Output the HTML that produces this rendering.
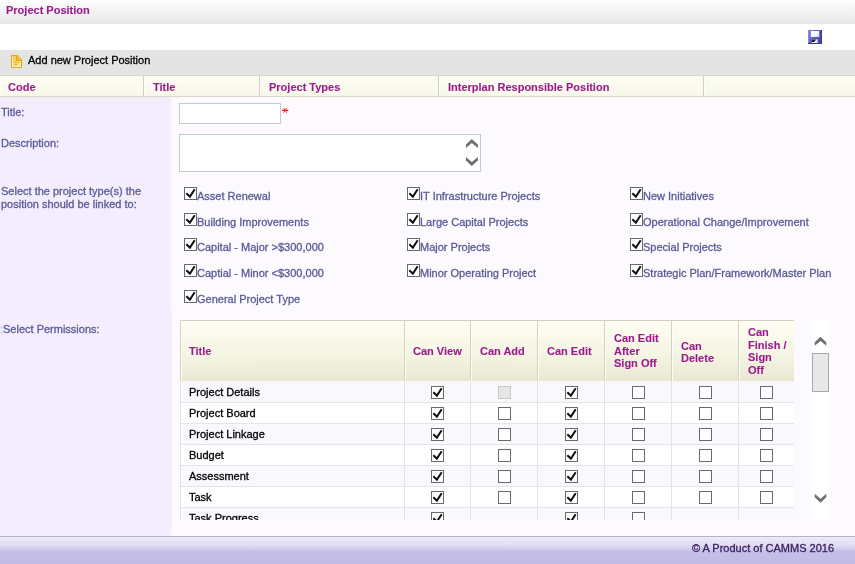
<!DOCTYPE html>
<html><head><meta charset="utf-8">
<style>
*{box-sizing:border-box;margin:0;padding:0}
html,body{width:855px;height:564px;overflow:hidden;background:#fcfaff;font-family:"Liberation Sans",sans-serif;font-size:11px;color:#000}
.abs{position:absolute}
#hdr{left:0;top:0;width:855px;height:24px;background:linear-gradient(#fdfdfd,#f2f2f2 50%,#e6e6e6)}
#hdr span{position:absolute;left:6px;top:4px;font-weight:bold;color:#9a1c8c;white-space:nowrap}
#white{left:0;top:24px;width:855px;height:26px;background:#fff}
#bar{left:0;top:50px;width:855px;height:25px;background:#e4e4e4}
#bar span{position:absolute;left:28px;top:4px;white-space:nowrap}
#cols{left:0;top:75px;width:855px;height:22px;background:linear-gradient(#fdfdf4,#f7f7e9);border-top:1px solid #d9d9c6;border-bottom:1px solid #d9d9c6}
.ch{position:absolute;top:0;height:20px;padding-top:1px;border-left:1px solid #d0d0c0;box-shadow:inset 1px 0 0 #fefef8;font-weight:bold;color:#9a1c8c;line-height:20px;padding-left:9px;white-space:nowrap}
#left{left:0;top:97px;width:171px;height:440px;background:#f3edfd}
#left2{left:171px;top:310px;width:1px;height:216px;background:#f3edfd}
.lbl{position:absolute;color:#5a5a96;white-space:nowrap;line-height:13px}
.cb{position:absolute;width:13px;height:13px;border:1px solid #6a6a6a;background:#fff}
.cb svg{position:absolute;left:0;top:0}
.cbl{position:absolute;color:#5a5a96;white-space:nowrap;line-height:13px}
#foot{left:0;top:536px;width:855px;height:28px;background:linear-gradient(#eeeaf9 0,#e2ddf4 30%,#d3cdee 44%,#c5bee8 54%,#c2bbe6 100%);border-top:1px solid #b8b4c8}
#foot span{position:absolute;right:20.5px;top:5px;color:#3a2060;white-space:nowrap}
#inp{left:179px;top:103px;width:102px;height:21px;background:#fff;border:1px solid #c0ccd8}
#ta{left:179px;top:134px;width:302px;height:38px;background:#fff;border:1px solid #c0ccd8}
.cb.dis{background:#e6e6e6;border-color:#c8c8c8}
#tblwrap{left:180px;top:320px;width:614px;height:200px;overflow:hidden;background:#f6f6f8}
#thead{position:absolute;left:0;top:0;width:614px;height:61px;background:linear-gradient(#fdfdf3,#f6f6e6 50%,#e8e8d2);border-top:1px solid #d0d0bc}
.th{position:absolute;top:0;height:60px;border-left:1px solid #d2d2c0;box-shadow:inset 1px 0 0 #fdfdf5;display:flex;align-items:center;padding-left:8px;font-weight:bold;color:#9a1c8c;line-height:12.65px}
.tr{position:absolute;left:0;width:614px;height:21px;background:#fff;border-bottom:1px solid #e4e4e8}
.tr.odd{background:#f9f9fd}
.td{position:absolute;top:0;height:21px;border-left:1px solid #e4e4e8}
.nm{position:absolute;left:8px;top:4px;line-height:13px;white-space:nowrap}
#sb{left:812px;top:320px;width:17px;height:200px;background:#fff}
span,.lbl,.cbl,.ch{will-change:transform;-webkit-text-stroke:0.3px}
#hdr span,.ch,.th span{-webkit-text-stroke:0.1px}
#thumb{position:absolute;left:0;top:33px;width:17px;height:39px;background:#e8e8e8;border:1px solid #a8a8a8}
</style></head><body>
<div id="hdr" class="abs"><span>Project Position</span></div>
<div id="white" class="abs"></div>
<div id="bar" class="abs"><span>Add new Project Position</span></div>
<div id="cols" class="abs">
 <div class="ch" style="left:0;border-left:none;padding-left:8px">Code</div>
 <div class="ch" style="left:143px">Title</div>
 <div class="ch" style="left:259px">Project Types</div>
 <div class="ch" style="left:438px">Interplan Responsible Position</div>
 <div class="ch" style="left:703px"></div>
</div>
<svg class="abs" style="left:808px;top:30px" width="14" height="14" viewBox="0 0 14 14"><defs><linearGradient id="sg" x1="0" y1="0" x2="1" y2="0.6"><stop offset="0" stop-color="#8282e4"/><stop offset="0.5" stop-color="#6262cc"/><stop offset="1" stop-color="#4646ac"/></linearGradient><linearGradient id="sl" x1="0" y1="0" x2="1" y2="1"><stop offset="0" stop-color="#fff"/><stop offset="0.6" stop-color="#f4f6fc"/><stop offset="1" stop-color="#c8d4ee"/></linearGradient></defs><rect x="0" y="0" width="14" height="14" fill="url(#sg)"/><rect x="0" y="0" width="1" height="14" fill="#8a8ae6"/><rect x="0" y="13" width="14" height="1" fill="#383898"/><rect x="13" y="0" width="1" height="14" fill="#383898"/><rect x="2.8" y="1" width="8.4" height="6" fill="url(#sl)"/><rect x="12" y="1.6" width="1" height="1" fill="#1c1c60"/><rect x="4" y="9.4" width="5.6" height="3.6" fill="#f4f4f8"/><path d="M4 9.4 H8 L6.4 12 H4 Z" fill="#1a1a2a"/></svg>
<svg class="abs" style="left:11px;top:55px" width="11" height="13" viewBox="0 0 11 13"><defs><linearGradient id="dg" x1="0" y1="0" x2="0.3" y2="1"><stop offset="0" stop-color="#f3c848"/><stop offset="0.55" stop-color="#f6d465"/><stop offset="1" stop-color="#fbe8a2"/></linearGradient></defs><path d="M0.5 0.5 H6.6 L10.5 4.4 V12.5 H0.5 Z" fill="url(#dg)" stroke="#e3a616" stroke-width="1"/><path d="M1.5 1.4 V11.5 H9.6" fill="none" stroke="#fdf3c4" stroke-width="1"/><path d="M5.5 1 V5.5 H10" fill="none" stroke="#e3a616" stroke-width="1"/><path d="M6 1 H6.8 L10 4.2 V5 H6 Z" fill="#f1bf38"/><rect x="7.4" y="2.6" width="1" height="1" fill="#fbe08a"/><rect x="3.2" y="7" width="4.6" height="1" fill="#e2ae2e"/><rect x="3.2" y="9.2" width="3" height="1" fill="#e2ae2e"/></svg>
<div id="left" class="abs"></div><div id="left2" class="abs"></div>
<div class="lbl" style="left:1px;top:106px">Title:</div>
<div class="lbl" style="left:1px;top:137px">Description:</div>
<div class="lbl" style="left:1px;top:185px">Select the project type(s) the<br>position should be linked to:</div>
<div class="lbl" style="left:0.4px;top:323px;color:#b9b9d8">:</div><div class="lbl" style="left:2.7px;top:323px">Select Permissions:</div>
<div class="abs" id="inp"></div><svg class="abs" style="left:281px;top:107px" width="8" height="7" viewBox="0 0 8 7"><path d="M0.9 3.4 H7.3" stroke="#ff1010" stroke-width="1.2" fill="none"/><path d="M2.6 1 L5.6 5.8 M5.6 1 L2.6 5.8" stroke="#ff2020" stroke-width="0.9" fill="none"/></svg>
<div class="abs" id="ta"><svg width="14" height="30" viewBox="0 0 14 30" style="position:absolute;left:285px;top:3px"><path d="M6.8 1 L0.9 6.6 V10 L6.8 5.1 L12.9 10 V6.6 Z M0.9 19 V22.4 L6.8 28 L12.9 22.4 V19 L6.8 23.9 Z" fill="#707070"/></svg></div>
<div class="cb" style="left:184px;top:187px"><svg width="11" height="11" viewBox="0 0 11 11"><path d="M1.3 5.3 L4.9 8.6 L9.7 1.3" fill="none" stroke="#111" stroke-width="2"/></svg></div><div class="cbl" style="left:197px;top:190px">Asset Renewal</div>
<div class="cb" style="left:184px;top:213px"><svg width="11" height="11" viewBox="0 0 11 11"><path d="M1.3 5.3 L4.9 8.6 L9.7 1.3" fill="none" stroke="#111" stroke-width="2"/></svg></div><div class="cbl" style="left:197px;top:216px">Building Improvements</div>
<div class="cb" style="left:184px;top:238px"><svg width="11" height="11" viewBox="0 0 11 11"><path d="M1.3 5.3 L4.9 8.6 L9.7 1.3" fill="none" stroke="#111" stroke-width="2"/></svg></div><div class="cbl" style="left:197px;top:241px">Capital - Major &gt;$300,000</div>
<div class="cb" style="left:184px;top:264px"><svg width="11" height="11" viewBox="0 0 11 11"><path d="M1.3 5.3 L4.9 8.6 L9.7 1.3" fill="none" stroke="#111" stroke-width="2"/></svg></div><div class="cbl" style="left:197px;top:267px">Captial - Minor &lt;$300,000</div>
<div class="cb" style="left:184px;top:290px"><svg width="11" height="11" viewBox="0 0 11 11"><path d="M1.3 5.3 L4.9 8.6 L9.7 1.3" fill="none" stroke="#111" stroke-width="2"/></svg></div><div class="cbl" style="left:197px;top:293px">General Project Type</div>
<div class="cb" style="left:407px;top:187px"><svg width="11" height="11" viewBox="0 0 11 11"><path d="M1.3 5.3 L4.9 8.6 L9.7 1.3" fill="none" stroke="#111" stroke-width="2"/></svg></div><div class="cbl" style="left:420px;top:190px">IT Infrastructure Projects</div>
<div class="cb" style="left:407px;top:213px"><svg width="11" height="11" viewBox="0 0 11 11"><path d="M1.3 5.3 L4.9 8.6 L9.7 1.3" fill="none" stroke="#111" stroke-width="2"/></svg></div><div class="cbl" style="left:420px;top:216px">Large Capital Projects</div>
<div class="cb" style="left:407px;top:238px"><svg width="11" height="11" viewBox="0 0 11 11"><path d="M1.3 5.3 L4.9 8.6 L9.7 1.3" fill="none" stroke="#111" stroke-width="2"/></svg></div><div class="cbl" style="left:420px;top:241px">Major Projects</div>
<div class="cb" style="left:407px;top:264px"><svg width="11" height="11" viewBox="0 0 11 11"><path d="M1.3 5.3 L4.9 8.6 L9.7 1.3" fill="none" stroke="#111" stroke-width="2"/></svg></div><div class="cbl" style="left:420px;top:267px">Minor Operating Project</div>
<div class="cb" style="left:630px;top:187px"><svg width="11" height="11" viewBox="0 0 11 11"><path d="M1.3 5.3 L4.9 8.6 L9.7 1.3" fill="none" stroke="#111" stroke-width="2"/></svg></div><div class="cbl" style="left:643px;top:190px">New Initiatives</div>
<div class="cb" style="left:630px;top:213px"><svg width="11" height="11" viewBox="0 0 11 11"><path d="M1.3 5.3 L4.9 8.6 L9.7 1.3" fill="none" stroke="#111" stroke-width="2"/></svg></div><div class="cbl" style="left:643px;top:216px">Operational Change/Improvement</div>
<div class="cb" style="left:630px;top:238px"><svg width="11" height="11" viewBox="0 0 11 11"><path d="M1.3 5.3 L4.9 8.6 L9.7 1.3" fill="none" stroke="#111" stroke-width="2"/></svg></div><div class="cbl" style="left:643px;top:241px">Special Projects</div>
<div class="cb" style="left:630px;top:264px"><svg width="11" height="11" viewBox="0 0 11 11"><path d="M1.3 5.3 L4.9 8.6 L9.7 1.3" fill="none" stroke="#111" stroke-width="2"/></svg></div><div class="cbl" style="left:643px;top:267px">Strategic Plan/Framework/Master Plan</div>

<div id="tblwrap" class="abs">
<div id="thead"><div class="th" style="left:0px;width:224px;padding-left:8px"><span>Title</span></div><div class="th" style="left:224px;width:66px;padding-left:8px"><span>Can View</span></div><div class="th" style="left:290px;width:67px;padding-left:9px"><span>Can Add</span></div><div class="th" style="left:357px;width:67px;padding-left:9px"><span>Can Edit</span></div><div class="th" style="left:424px;width:67px;padding-left:9px"><span>Can Edit<br>After<br>Sign Off</span></div><div class="th" style="left:491px;width:67px;padding-left:9px"><span><i style="display:block;height:1.5px"></i>Can<br>Delete</span></div><div class="th" style="left:558px;width:56px;padding-left:9px"><span>Can<br>Finish /<br>Sign<br>Off</span></div></div>
<div class="tr odd" style="top:62px"><div class="td" style="left:0;width:224px"><span class="nm">Project Details</span></div><div class="td" style="left:224px;width:66px"></div><div class="cb" style="left:251px;top:4px"><svg width="11" height="11" viewBox="0 0 11 11"><path d="M1.3 5.3 L4.9 8.6 L9.7 1.3" fill="none" stroke="#111" stroke-width="2"/></svg></div><div class="td" style="left:290px;width:67px"></div><div class="cb dis" style="left:318px;top:4px"></div><div class="td" style="left:357px;width:67px"></div><div class="cb" style="left:385px;top:4px"><svg width="11" height="11" viewBox="0 0 11 11"><path d="M1.3 5.3 L4.9 8.6 L9.7 1.3" fill="none" stroke="#111" stroke-width="2"/></svg></div><div class="td" style="left:424px;width:67px"></div><div class="cb" style="left:452px;top:4px"></div><div class="td" style="left:491px;width:67px"></div><div class="cb" style="left:519px;top:4px"></div><div class="td" style="left:558px;width:56px"></div><div class="cb" style="left:580px;top:4px"></div></div>
<div class="tr " style="top:83px"><div class="td" style="left:0;width:224px"><span class="nm">Project Board</span></div><div class="td" style="left:224px;width:66px"></div><div class="cb" style="left:251px;top:4px"><svg width="11" height="11" viewBox="0 0 11 11"><path d="M1.3 5.3 L4.9 8.6 L9.7 1.3" fill="none" stroke="#111" stroke-width="2"/></svg></div><div class="td" style="left:290px;width:67px"></div><div class="cb" style="left:318px;top:4px"></div><div class="td" style="left:357px;width:67px"></div><div class="cb" style="left:385px;top:4px"><svg width="11" height="11" viewBox="0 0 11 11"><path d="M1.3 5.3 L4.9 8.6 L9.7 1.3" fill="none" stroke="#111" stroke-width="2"/></svg></div><div class="td" style="left:424px;width:67px"></div><div class="cb" style="left:452px;top:4px"></div><div class="td" style="left:491px;width:67px"></div><div class="cb" style="left:519px;top:4px"></div><div class="td" style="left:558px;width:56px"></div><div class="cb" style="left:580px;top:4px"></div></div>
<div class="tr odd" style="top:104px"><div class="td" style="left:0;width:224px"><span class="nm">Project Linkage</span></div><div class="td" style="left:224px;width:66px"></div><div class="cb" style="left:251px;top:4px"><svg width="11" height="11" viewBox="0 0 11 11"><path d="M1.3 5.3 L4.9 8.6 L9.7 1.3" fill="none" stroke="#111" stroke-width="2"/></svg></div><div class="td" style="left:290px;width:67px"></div><div class="cb" style="left:318px;top:4px"></div><div class="td" style="left:357px;width:67px"></div><div class="cb" style="left:385px;top:4px"><svg width="11" height="11" viewBox="0 0 11 11"><path d="M1.3 5.3 L4.9 8.6 L9.7 1.3" fill="none" stroke="#111" stroke-width="2"/></svg></div><div class="td" style="left:424px;width:67px"></div><div class="cb" style="left:452px;top:4px"></div><div class="td" style="left:491px;width:67px"></div><div class="cb" style="left:519px;top:4px"></div><div class="td" style="left:558px;width:56px"></div><div class="cb" style="left:580px;top:4px"></div></div>
<div class="tr " style="top:125px"><div class="td" style="left:0;width:224px"><span class="nm">Budget</span></div><div class="td" style="left:224px;width:66px"></div><div class="cb" style="left:251px;top:4px"><svg width="11" height="11" viewBox="0 0 11 11"><path d="M1.3 5.3 L4.9 8.6 L9.7 1.3" fill="none" stroke="#111" stroke-width="2"/></svg></div><div class="td" style="left:290px;width:67px"></div><div class="cb" style="left:318px;top:4px"></div><div class="td" style="left:357px;width:67px"></div><div class="cb" style="left:385px;top:4px"><svg width="11" height="11" viewBox="0 0 11 11"><path d="M1.3 5.3 L4.9 8.6 L9.7 1.3" fill="none" stroke="#111" stroke-width="2"/></svg></div><div class="td" style="left:424px;width:67px"></div><div class="cb" style="left:452px;top:4px"></div><div class="td" style="left:491px;width:67px"></div><div class="cb" style="left:519px;top:4px"></div><div class="td" style="left:558px;width:56px"></div><div class="cb" style="left:580px;top:4px"></div></div>
<div class="tr odd" style="top:146px"><div class="td" style="left:0;width:224px"><span class="nm">Assessment</span></div><div class="td" style="left:224px;width:66px"></div><div class="cb" style="left:251px;top:4px"><svg width="11" height="11" viewBox="0 0 11 11"><path d="M1.3 5.3 L4.9 8.6 L9.7 1.3" fill="none" stroke="#111" stroke-width="2"/></svg></div><div class="td" style="left:290px;width:67px"></div><div class="cb" style="left:318px;top:4px"></div><div class="td" style="left:357px;width:67px"></div><div class="cb" style="left:385px;top:4px"><svg width="11" height="11" viewBox="0 0 11 11"><path d="M1.3 5.3 L4.9 8.6 L9.7 1.3" fill="none" stroke="#111" stroke-width="2"/></svg></div><div class="td" style="left:424px;width:67px"></div><div class="cb" style="left:452px;top:4px"></div><div class="td" style="left:491px;width:67px"></div><div class="cb" style="left:519px;top:4px"></div><div class="td" style="left:558px;width:56px"></div><div class="cb" style="left:580px;top:4px"></div></div>
<div class="tr " style="top:167px"><div class="td" style="left:0;width:224px"><span class="nm">Task</span></div><div class="td" style="left:224px;width:66px"></div><div class="cb" style="left:251px;top:4px"><svg width="11" height="11" viewBox="0 0 11 11"><path d="M1.3 5.3 L4.9 8.6 L9.7 1.3" fill="none" stroke="#111" stroke-width="2"/></svg></div><div class="td" style="left:290px;width:67px"></div><div class="cb" style="left:318px;top:4px"></div><div class="td" style="left:357px;width:67px"></div><div class="cb" style="left:385px;top:4px"><svg width="11" height="11" viewBox="0 0 11 11"><path d="M1.3 5.3 L4.9 8.6 L9.7 1.3" fill="none" stroke="#111" stroke-width="2"/></svg></div><div class="td" style="left:424px;width:67px"></div><div class="cb" style="left:452px;top:4px"></div><div class="td" style="left:491px;width:67px"></div><div class="cb" style="left:519px;top:4px"></div><div class="td" style="left:558px;width:56px"></div><div class="cb" style="left:580px;top:4px"></div></div>
<div class="tr odd" style="top:188px"><div class="td" style="left:0;width:224px"><span class="nm">Task Progress</span></div><div class="td" style="left:224px;width:66px"></div><div class="cb" style="left:251px;top:4px"><svg width="11" height="11" viewBox="0 0 11 11"><path d="M1.3 5.3 L4.9 8.6 L9.7 1.3" fill="none" stroke="#111" stroke-width="2"/></svg></div><div class="td" style="left:290px;width:67px"></div><div class="td" style="left:357px;width:67px"></div><div class="cb" style="left:385px;top:4px"><svg width="11" height="11" viewBox="0 0 11 11"><path d="M1.3 5.3 L4.9 8.6 L9.7 1.3" fill="none" stroke="#111" stroke-width="2"/></svg></div><div class="td" style="left:424px;width:67px"></div><div class="cb" style="left:452px;top:4px"></div><div class="td" style="left:491px;width:67px"></div><div class="td" style="left:558px;width:56px"></div></div>
</div>

<div id="sb" class="abs"><svg width="17" height="200" viewBox="0 0 17 200" style="position:absolute;left:0;top:0"><path d="M8.5 16.8 L2.7 22.3 V25.8 L8.5 20.9 L14.3 25.8 V22.3 Z M2.7 173.8 V177.3 L8.5 182.8 L14.3 177.3 V173.8 L8.5 178.7 Z" fill="#707070"/></svg><div id="thumb"></div></div>
<div id="foot" class="abs"><span>© A Product of CAMMS 2016</span></div>
</body></html>
